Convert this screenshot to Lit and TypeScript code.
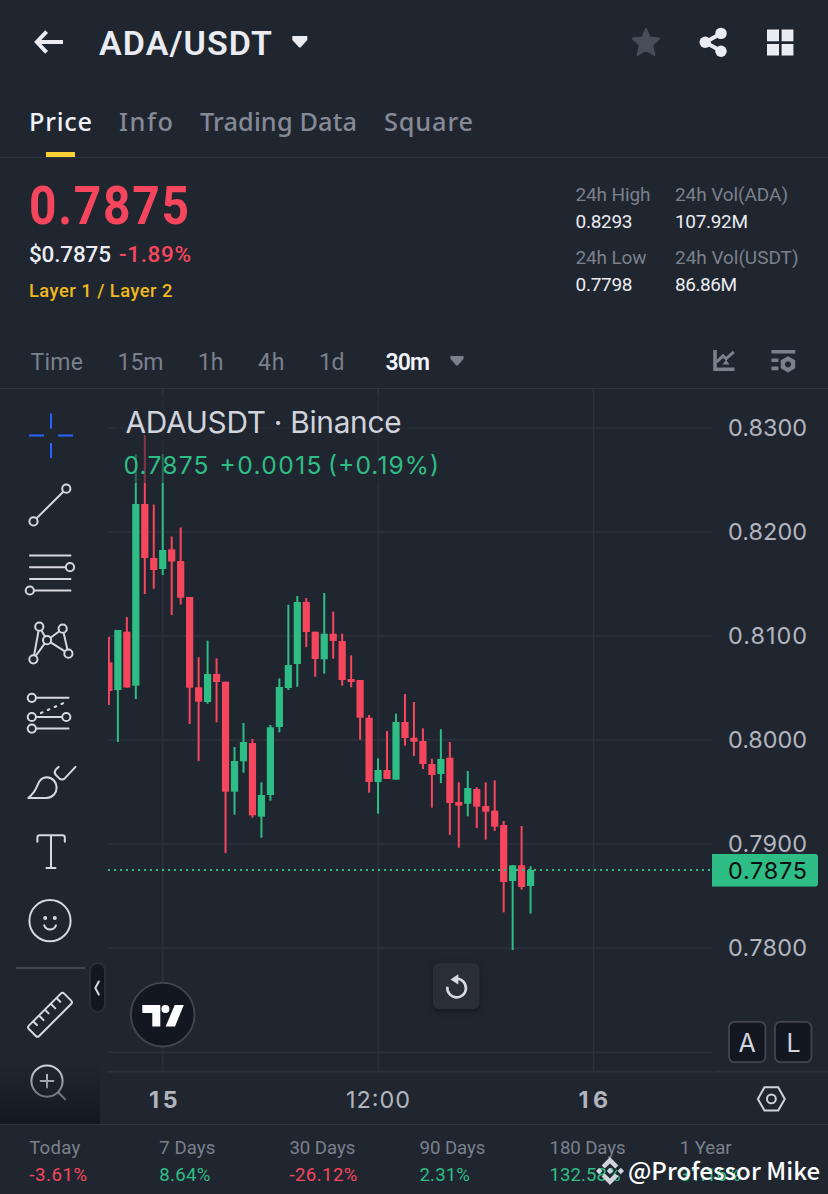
import { LitElement, html, svg, css } from "lit";
import { customElement, property } from "lit/decorators.js";

/** One line of text, tracked out (or condensed) so it fills a given width. */
@customElement("fit-text")
class FitText extends LitElement {
  @property({ type: Number }) w = 0;
  @property({ type: Number }) squeeze = 1;
  @property() text = "";
  static styles = css`
    :host { display: block; white-space: pre; }
    span { display: inline-block; transform-origin: 0 50%; }
  `;
  render() {
    return html`<span>${this.text}</span>`;
  }
  firstUpdated() {
    const span = this.renderRoot.querySelector("span")!;
    const natural = span.getBoundingClientRect().width;
    const target = this.w / this.squeeze;
    const gap = (target - natural) / Math.max(1, this.text.length - 1);
    span.style.letterSpacing = `${gap}px`;
    span.style.marginRight = `${-gap}px`;
    if (this.squeeze !== 1) span.style.transform = `scaleX(${this.squeeze})`;
    this.style.width = `${this.w}px`;
  }
}

const fit = (text: string, w: number, cls = "", squeeze = 1) =>
  html`<fit-text class=${cls} .text=${text} .w=${w} .squeeze=${squeeze}></fit-text>`;

// [up, high, open/close top, open/close bottom, low] in chart canvas units
const CANDLES: [number, number, number, number, number][] = [
  [0, 637, 662.3, 691, 705], [1, 630, 630, 690, 742], [0, 617, 631.7, 687.5, 687.5],
  [1, 454, 504, 685.7, 699], [0, 435, 504, 558, 594], [0, 504.5, 558, 570, 588.7],
  [1, 454, 550, 569, 575], [0, 536.5, 549.3, 561.5, 615], [0, 527.5, 561, 597.7, 604.5],
  [0, 597, 597, 687.7, 724], [0, 657.3, 687.3, 701.7, 761], [1, 640.7, 674, 702, 703.7],
  [0, 658.3, 674, 682, 722.3], [0, 681.7, 681.7, 791.7, 853], [1, 747, 761, 791.7, 814.7],
  [1, 723, 742, 761.3, 772.7], [0, 739, 743, 815.3, 817.7], [1, 782.3, 795, 816.7, 837.7],
  [1, 725, 727.3, 795, 800.7], [1, 678.3, 687, 727, 732.3], [1, 604.7, 665, 688, 690],
  [1, 596, 602, 664, 686.7], [0, 598, 602, 632, 647], [0, 631.7, 631.7, 659, 676.7],
  [1, 593, 633.7, 659.3, 673.7], [0, 611.7, 633.7, 641, 658.7], [0, 633.7, 641, 680, 685.7],
  [0, 655.3, 679, 682, 687.3], [0, 680, 680, 717.7, 739.7], [0, 715, 717.7, 782, 792.7],
  [1, 758.3, 770, 782, 813.7], [0, 731, 770, 779, 779], [1, 713.7, 722, 779.7, 779.7],
  [0, 694, 722, 738, 745.7], [0, 702, 737.7, 741.7, 756], [0, 728.3, 741, 764, 769],
  [0, 758.7, 764, 775, 807.7], [1, 729.3, 759, 774, 783], [0, 742, 757.7, 803, 835],
  [0, 782.3, 802, 805.7, 847.7], [1, 771, 788, 803.7, 816.3], [0, 787.3, 789, 806.7, 828],
  [0, 782.3, 806, 811.7, 839.7], [0, 780.3, 810.7, 826.7, 831], [0, 821, 825, 882, 912.3],
  [1, 865, 865.3, 881, 950], [0, 826, 865.3, 887, 889.7], [1, 866.3, 870, 886, 913.7],
];

@customElement("price-chart")
class PriceChart extends LitElement {
  static styles = css`
    :host { display: block; width: 728px; height: 735px; }
    svg { display: block; font-family: Inter, sans-serif; }
    .grid { stroke: #2c323c; stroke-width: 1.6; fill: none; }
    .up { fill: #2ebd85; }
    .down { fill: #f6465d; }
    .veil { fill: #202630; opacity: 0.55; }
    .title { font-size: 29.8px; fill: #d1d4dc; }
    .quote { font-size: 24.6px; fill: #2ebd85; }
    .tick { font-size: 23.4px; fill: #b2b5be; }
    .day { font-size: 23.2px; font-weight: 700; fill: #b2b5be; }
    .tagtext { font-size: 23.4px; fill: #0b0e11; }
    .last { stroke: #2ebd85; stroke-width: 1.8; stroke-dasharray: 2 4; }
    .key { fill: #131722; stroke: #434651; stroke-width: 1.8; }
    .keytext { font-size: 25px; fill: #d1d4dc; text-anchor: middle; }
    .line { fill: none; stroke: #d1d4dc; stroke-width: 2; }
    .reset { fill: #2a2e39; filter: drop-shadow(0 2px 3px rgba(10, 12, 20, 0.6)); }
    .arc { fill: none; stroke: #d8dae2; stroke-width: 2.6; }
    .arrow { fill: #d8dae2; }
    .white { fill: #fff; }
  `;
  render() {
    const prices = ["0.8300", "0.8200", "0.8100", "0.8000", "0.7900", "0.7800"];
    return html`<svg width="728" height="735" viewBox="100 389 728 735">
      <clipPath id="plot"><rect x="108" y="389" width="604" height="682" /></clipPath>
      ${prices.map((_, i) => svg`<path class="grid" d="M108 ${428 + i * 104}H712" />`)}
      <path class="grid" d="M108 1052.3H712M108 1071.6H712.5M714 1071.6H828M162.7 389V1071M378.3 389V1071M593.5 389V1071" />
      <g clip-path="url(#plot)">
        ${CANDLES.map(([up, hi, top, bottom, lo], i) => {
          const x = 108.9 + i * 8.972;
          return svg`<g class=${up ? "up" : "down"}>
            <rect x=${x - 1} y=${hi} width="2" height=${lo - hi} />
            <rect x=${x - 3.6} y=${top} width="7.2" height=${bottom - top} />
          </g>`;
        })}
      </g>
      <path class="last" d="M108 870H712" />
      <path class="veil" d="M116 397H408V445H446V483H116Z" />
      <text class="title" x="125.5" y="432.7" textLength="276">ADAUSDT · Binance</text>
      <text class="quote" x="123.5" y="473.8" textLength="85">0.7875</text>
      <text class="quote" x="219.5" y="473.8" textLength="102">+0.0015</text>
      <text class="quote" x="328" y="473.8" textLength="111">(+0.19%)</text>
      ${prices.map((p, i) => svg`<text class="tick" x="728" y=${436 + i * 104} textLength="79">${p}</text>`)}
      <path class="up" d="M712 854H815Q818 854 818 857V883.5Q818 886.5 815 886.5H712Z" />
      <text class="tagtext" x="728" y="878.5" textLength="79">0.7875</text>
      <text class="day" x="149" y="1107.5" textLength="28.5">15</text>
      <text class="tick" x="346" y="1107.5" textLength="64">12:00</text>
      <text class="day" x="578.5" y="1107.5" textLength="29.5">16</text>
      <rect class="key" x="729" y="1021.8" width="36.4" height="40.4" rx="5.5" />
      <rect class="key" x="775" y="1021.8" width="36.4" height="40.4" rx="5.5" />
      <text class="keytext" x="747.2" y="1051.5">A</text>
      <text class="keytext" x="793.6" y="1051.5">L</text>
      <path class="line" d="M764.5 1087.2H778.2L784.8 1098.9L778.2 1110.6H764.5L757.9 1098.9Z" />
      <circle class="line" cx="771.4" cy="1098.9" r="4.4" />
      <rect class="reset" x="433" y="963" width="46.5" height="46" rx="6" />
      <path class="arc" d="M447.4 986.8A9.3 9.3 0 1 0 457 978.8" />
      <path class="arrow" d="M450.5 979.4L458.3 974.2V984.6Z" />
      <circle class="key" cx="162.7" cy="1014.7" r="31.8" />
      <path class="white" d="M142.3 1005H160.3V1026.4H152.3V1013H142.3ZM174.7 1005H183.8L175 1026.4H165.7Z" />
      <circle class="white" cx="165.4" cy="1009" r="4" />
    </svg>`;
  }
}

const dot = (x: number, y: number) => svg`<circle class="node" cx=${x} cy=${y} r="4.1" />`;

@customElement("draw-tools")
class DrawTools extends LitElement {
  static styles = css`
    :host { display: flex; flex-direction: column; width: 100px; height: 735px; padding-top: 12.4px; box-sizing: border-box; position: relative; }
    svg { display: block; flex: none; fill: none; stroke: #d6d8e0; stroke-width: 2; stroke-linecap: round; stroke-linejoin: round; }
    .node { fill: #202630; }
    .solid { fill: #d6d8e0; stroke: none; }
    .blue { stroke: #2962ff; stroke-linecap: butt; }
    .dots { stroke-dasharray: 1.6 5.9; stroke-width: 2.2; }
    .rule { flex: none; height: 2px; width: 69px; margin: 11.7px 0 11.3px 15.5px; background: #434753; }
    .fade { position: absolute; left: 0; right: 0; bottom: 0; height: 60px; background: linear-gradient(rgba(19, 23, 34, 0), rgba(19, 23, 34, 0.95)); }
    .handle { position: absolute; left: 88.5px; top: 573px; width: 13px; height: 47px; border: 2px solid #2a2e39; border-radius: 9px; background: #131722; display: flex; align-items: center; justify-content: center; }
  `;
  render() {
    const icons = [
      svg`<path class="blue" d="M51 414V429M51 443.5V458.5M29 436H44M58 436H73" />`,
      svg`<path d="M33.5 521L66.3 488.3" />${dot(33.5, 521)}${dot(66.3, 488.3)}`,
      svg`<path d="M30 555.3H70.5M30 567H66M30 578.7H70.5M34 590.3H70.5" />${dot(70, 567)}${dot(29.8, 590.3)}`,
      svg`<path d="M33.4 659.3L39.3 626.7L47.1 640.2L62.7 628.7L68.4 653.7L47.1 640.2Z" />${dot(39.3, 626.7)}${dot(62.7, 628.7)}${dot(47.1, 640.2)}${dot(68.4, 653.7)}${dot(33.4, 659.3)}`,
      svg`<path d="M36 698H68.5M36 717.2H62M36 728.8H68.5" /><path class="dots" d="M41 713.2L66.5 702" />${dot(31.8, 698)}${dot(31.8, 717.2)}${dot(66.3, 717.2)}${dot(31.8, 728.8)}`,
      svg`<path d="M28.3 798.4H46.5C60 797.5 60 778.5 46.7 777.7C40.5 777.9 38.6 782.5 37 786.8C34.9 792 31.6 795.6 28.3 798.4ZM58.6 767.3L56 769.7C54.4 771.5 54.3 773.5 55.7 775.2L59.2 778.8C61.2 780.3 63.3 780.1 65 778.6L75.5 767.3" />`,
      svg`<path d="M37.4 841.3V837Q37.4 834.8 39.6 834.8H62.6Q64.8 834.8 64.8 837V841.3M51 834.8V867.3M46.5 867.5H55.5" />`,
      svg`<circle cx="50" cy="920.5" r="20.6" /><circle class="solid" cx="45.2" cy="917.7" r="2" /><circle class="solid" cx="54.8" cy="917.7" r="2" /><path d="M44.2 925.2C46.5 930.7 53.7 930.7 56 925.2" />`,
    ];
    return html`
      ${icons.map((g, i) => svgIcon(g, 401.4 + i * 69.2))}
      <div class="rule"></div>
      ${svgIcon(svg`<g transform="translate(50 1014.8) rotate(-45)"><rect x="-25" y="-7.3" width="50" height="14.6" rx="2.4" /><path d="M-16.5 -7V-2M-8.3 -7V-0.8M0 -7V-2M8.3 -7V-0.8M16.5 -7V-2" /></g>`, 980)}
      ${svgIcon(svg`<circle cx="47" cy="1081.3" r="15.6" /><path d="M40.6 1081.3H53.4M47 1075V1087.8M58.3 1092.7L65.2 1099.6" />`, 1049.2)}
      <div class="fade"></div>
      <div class="handle"><svg width="8" height="18" viewBox="0 0 8 18"><path d="M5.8 2.5L2.3 9L5.8 15.5" /></svg></div>
    `;
  }
}

const svgIcon = (g: unknown, top: number) =>
  html`<svg width="100" height="69.2" viewBox="0 ${top} 100 69.2">${g}</svg>`;

@customElement("app-root")
class AppRoot extends LitElement {
  static styles = css`
    :host { display: flex; flex-direction: column; position: relative; width: 828px; height: 1194px; overflow: hidden; background: #202630; font-family: Roboto, sans-serif; color: #eaecf2; }
    svg { display: block; flex: none; }
    header { height: 84px; display: flex; align-items: center; padding: 0 34px; box-sizing: border-box; }
    .title { font-size: 34px; font-weight: 600; line-height: 40px; margin: 2px 20px 0 35px; }
    .actions { display: flex; gap: 38px; margin-left: auto; align-items: center; }
    nav { display: flex; gap: 27px; height: 73px; padding-left: 29px; border-bottom: 1px solid #2f353f; }
    .tab { display: flex; flex-direction: column; align-items: center; padding-top: 21px; font-family: "Noto Sans", sans-serif; font-size: 25.3px; line-height: 32px; font-weight: 500; color: #858a96; }
    .tab.on { color: #f2f4fa; }
    .bar { width: 29px; height: 5px; margin-top: 15px; background: #f8d033; }
    .summary { display: flex; justify-content: space-between; height: 176px; padding: 0 28px 0 29px; box-sizing: border-box; }
    .price { font-size: 54.5px; font-weight: 700; line-height: 60px; margin-top: 16.5px; color: #f6465d; }
    .usd { display: flex; gap: 8px; font-size: 22.5px; line-height: 28px; font-weight: 500; margin-top: 5.5px; }
    .layer { font-size: 18.3px; line-height: 24px; font-weight: 500; margin-top: 10.5px; color: #efb91e; }
    .stats { display: grid; grid-template-columns: 99.5px 125px; grid-auto-rows: 54px; row-gap: 9.2px; padding-top: 23px; font-size: 19px; line-height: 27px; }
    .red { color: #f6465d; }
    .green { color: #2ebd85; }
    .muted { color: #7b808c; }
    .intervals { display: flex; align-items: center; height: 54px; padding: 0 32px 0 30.5px; border-bottom: 1px solid #2f353f; font-size: 23px; line-height: 28px; color: #7b808c; }
    .intervals fit-text { margin-top: 3px; }
    .frames { display: flex; align-items: center; gap: 34.5px; flex: 1; }
    .current { display: flex; align-items: center; gap: 20px; margin-left: 6.5px; font-weight: 600; color: #f2f4fa; }
    .tools { display: flex; gap: 36.5px; align-items: center; }
    .board { display: flex; height: 735px; }
    footer { display: grid; grid-template-columns: repeat(6, 130.1px); height: 70px; box-sizing: border-box; border-top: 1px solid #2f353f; padding: 9.5px 0 0 29.2px; font-size: 18.6px; line-height: 27px; }
    .mark { position: absolute; right: 8px; bottom: 8px; display: flex; align-items: center; gap: 4px; font-family: "Noto Sans CJK SC", sans-serif; font-weight: 500; font-size: 24px; line-height: 32px; color: #fff; }
    .mark fit-text { margin-top: -2px; }
  `;
  render() {
    const stats: [string, number, string, number][] = [
      ["24h High", 75, "0.8293", 57], ["24h Vol(ADA)", 113, "107.92M", 73],
      ["24h Low", 71, "0.7798", 57], ["24h Vol(USDT)", 123.5, "86.86M", 62],
    ];
    const perf: [string, number, string, number][] = [
      ["Today", 51, "-3.61%", 58], ["7 Days", 56, "8.64%", 51], ["30 Days", 66, "-26.12%", 68],
      ["90 Days", 66, "2.31%", 50.5], ["180 Days", 76, "132.58%", 71], ["1 Year", 52, "31.16%", 61],
    ];
    return html`
      <header>
        <svg width="30" height="24" viewBox="0 0 30 24" fill="none" stroke="#eaecf2" stroke-width="3.9"><path d="M12.6 1.6L2.8 12L12.6 22.4M2.6 12H29" /></svg>
        ${fit("ADA/USDT", 173, "title")}
        <svg width="16" height="12" viewBox="0 0 16 12"><path fill="#eaecf2" d="M.3 0H15.3V4L8.5 11.4H7.2L.3 4Z" /></svg>
        <div class="actions">
          <svg width="30" height="30" viewBox="0 0 30 30"><path fill="#474d59" stroke="#474d59" stroke-width="2" stroke-linejoin="round" d="M15 2L18.6 10.6L28.2 11.6L21.2 18L23.4 28L15 23L6.6 28L8.8 18L1.8 11.6L11.4 10.6Z" /></svg>
          <svg width="30" height="30" viewBox="0 0 30 30" fill="#eaecf2"><path d="M22 6.5L6.2 15.3L22 24" fill="none" stroke="#eaecf2" stroke-width="4" /><circle cx="22" cy="6.4" r="5.7" /><circle cx="6.2" cy="15.3" r="5.7" /><circle cx="22" cy="24.2" r="5.7" /></svg>
          <svg width="27" height="27" viewBox="0 0 27 27"><path fill="#eaecf2" d="M0 .5H12V12.2H0ZM14.6 .5H26.4V12.2H14.6ZM0 15H12V26.6H0ZM14.6 15H26.4V26.6H14.6Z" /></svg>
        </div>
      </header>
      <nav>
        <div class="tab on">${fit("Price", 63)}<div class="bar"></div></div>
        <div class="tab">${fit("Info", 54)}</div>
        <div class="tab">${fit("Trading Data", 157)}</div>
        <div class="tab">${fit("Square", 89)}</div>
      </nav>
      <section class="summary">
        <div>
          ${fit("0.7875", 160, "price", 0.88)}
          <div class="usd">${fit("$0.7875", 82)}${fit("-1.89%", 72, "red")}</div>
          ${fit("Layer 1 / Layer 2", 143.5, "layer")}
        </div>
        <div class="stats">
          ${stats.map(([k, kw, v, vw]) => html`<div>${fit(k, kw, "muted")}${fit(v, vw)}</div>`)}
        </div>
      </section>
      <section class="intervals">
        <div class="frames">
          ${fit("Time", 52.5)}${fit("15m", 46)}${fit("1h", 25.5)}${fit("4h", 26.5)}${fit("1d", 25.5)}
          <div class="current">${fit("30m", 44.5)}
            <svg width="14" height="10" viewBox="0 0 14 10"><path fill="#7b808c" d="M.5 0H13.5V3L7.6 9.6H6.4L.5 3Z" /></svg>
          </div>
        </div>
        <div class="tools">
          <svg width="22" height="22" viewBox="0 0 22 22" fill="none" stroke="#7b808c" stroke-width="3"><path d="M2 0V19.3H21.5" stroke-width="3.6" /><path d="M3.5 12L10 5.8L13 8.8L20.8 1.8" /><path d="M13 9.8L16.5 14.6H9.5Z" fill="#7b808c" stroke="none" /></svg>
          <svg width="25" height="23" viewBox="0 0 25 23"><path fill="#7b808c" fill-rule="evenodd" d="M.5 0H24.2V3.6H.5ZM.5 8.4H7.4V12H.5ZM.5 16.5H7.4V20.2H.5ZM17 6.2L24.2 10.3V18.3L17 22.4L9.8 18.3V10.3ZM17 11.2A3.1 3.1 0 1 0 17.01 11.2Z" /></svg>
        </div>
      </section>
      <section class="board"><draw-tools></draw-tools><price-chart></price-chart></section>
      <footer>
        ${perf.map(([k, kw, v, vw]) => html`<div>${fit(k, kw, "muted")}${fit(v, vw, v[0] === "-" ? "red" : "green")}</div>`)}
      </footer>
      <div class="mark">
        <svg width="28" height="28" viewBox="0 0 28 28" fill="#cfd2da"><path d="M14 0L22.4 8.4L19.2 11.6L14 6.4L8.8 11.6L5.6 8.4ZM14 28L22.4 19.6L19.2 16.4L14 21.6L8.8 16.4L5.6 19.6ZM14 10.8L17.2 14L14 17.2L10.8 14ZM3.2 10.8L6.4 14L3.2 17.2L0 14ZM24.8 10.8L28 14L24.8 17.2L21.6 14Z" /></svg>
        ${fit("@Professor Mike", 192)}
      </div>
    `;
  }
}
